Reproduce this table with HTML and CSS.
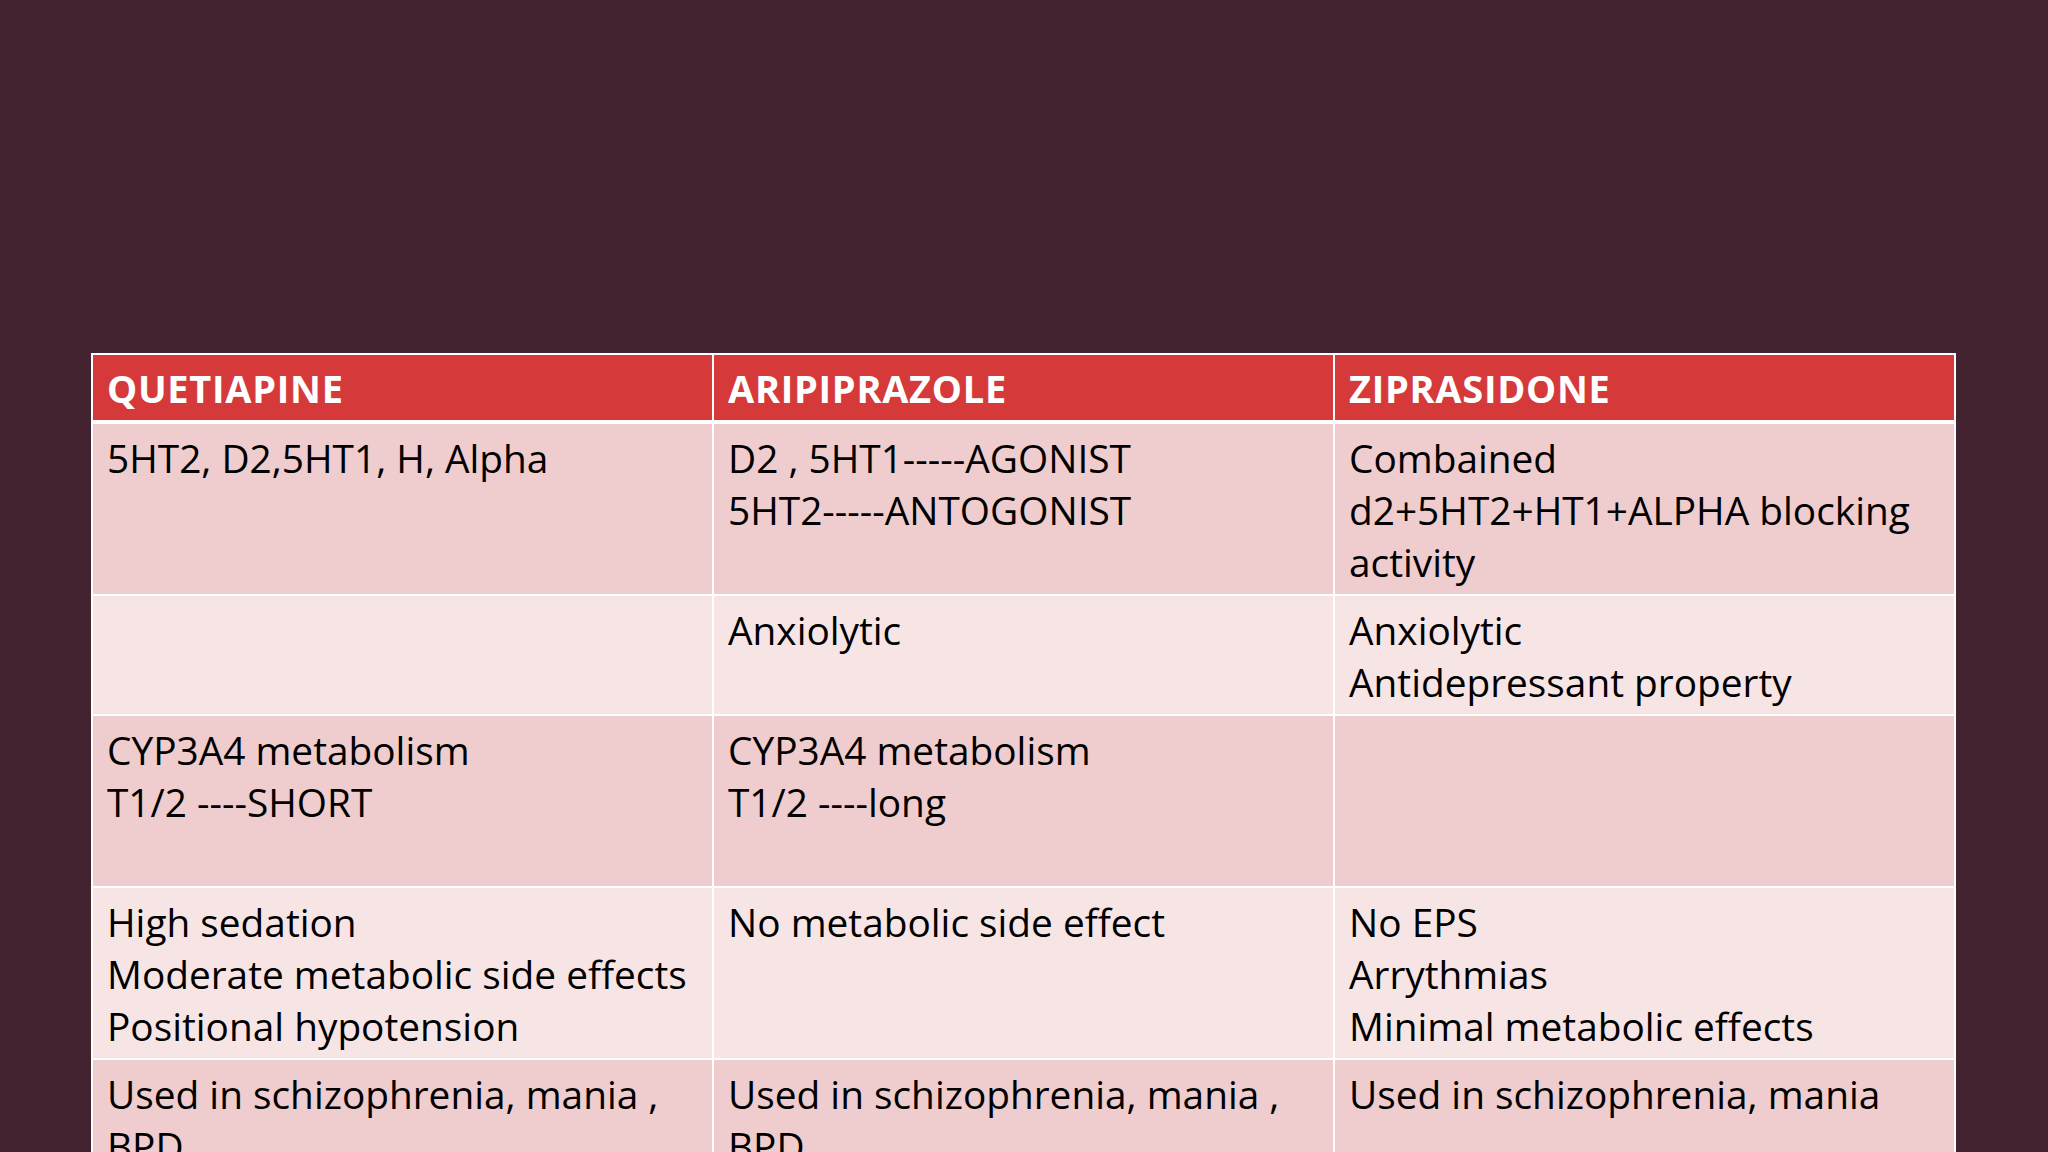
FILE: index.html
```html
<!DOCTYPE html>
<html>
<head>
<meta charset="utf-8">
<link rel="stylesheet" href="styles.css">
</head>
<body>
<div class="slide">
  <table class="drugs">
    <thead>
      <tr>
        <th>QUETIAPINE</th>
        <th>ARIPIPRAZOLE</th>
        <th>ZIPRASIDONE</th>
      </tr>
    </thead>
    <tbody>
      <tr class="odd lines3">
        <td>5HT2, D2,5HT1, H, Alpha</td>
        <td>D2 , 5HT1-----AGONIST<br>5HT2-----ANTOGONIST</td>
        <td>Combained<br>d2+5HT2+HT1+ALPHA blocking activity</td>
      </tr>
      <tr class="even">
        <td></td>
        <td>Anxiolytic</td>
        <td>Anxiolytic<br>Antidepressant property</td>
      </tr>
      <tr class="odd lines3">
        <td>CYP3A4 metabolism<br>T1/2 ----SHORT</td>
        <td>CYP3A4 metabolism<br>T1/2 ----long</td>
        <td></td>
      </tr>
      <tr class="even lines3">
        <td>High sedation<br>Moderate metabolic side effects<br>Positional hypotension</td>
        <td>No metabolic side effect</td>
        <td>No EPS<br>Arrythmias<br>Minimal metabolic effects</td>
      </tr>
      <tr class="odd">
        <td>Used in schizophrenia, mania , BPD</td>
        <td>Used in schizophrenia, mania , BPD</td>
        <td>Used in schizophrenia, mania</td>
      </tr>
    </tbody>
  </table>
</div>
</body>
</html>
```

FILE: styles.css
```css
html, body {
  margin: 0;
  padding: 0;
  background: #42232f;
  width: 2048px;
  height: 1152px;
  overflow: hidden;
}

.slide {
  padding: 353px 0 0 91px;
  font-family: "Open Sans", "Noto Sans", sans-serif;
}

.drugs {
  border-collapse: collapse;
  width: 1865px;
  table-layout: fixed;
  border: 2px solid #ffffff;
}

.drugs th,
.drugs td {
  width: 33.333%;
  text-align: left;
  vertical-align: top;
  font-size: 38.8px;
  line-height: 52px;
  color: #000000;
  padding: 8px 14px 6px 14px;
  border: 2px solid #ffffff;
}

.drugs th {
  background: #d6393a;
  color: #ffffff;
  font-size: 38px;
  font-weight: 700;
  letter-spacing: 0.7px;
  padding-top: 7px;
  padding-bottom: 6px;
  border-bottom: 4px solid #ffffff;
}

.drugs tr.odd td {
  background: #efcccd;
}

.drugs tr.even td {
  background: #f7e5e6;
}

.drugs tr.lines3 td {
  height: 156px;
}
```
